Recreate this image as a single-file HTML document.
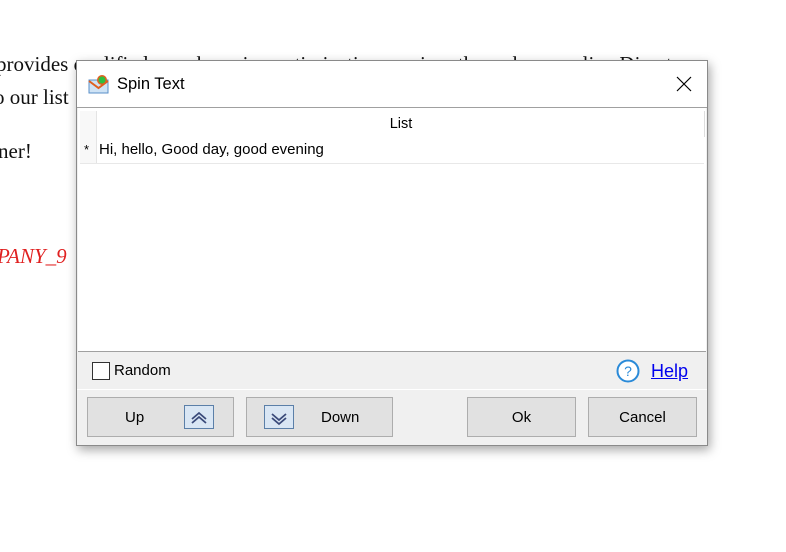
<!DOCTYPE html>
<html><head><meta charset="utf-8"><style>
body{margin:0;width:786px;height:552px;background:#fff;position:relative;overflow:hidden;font-family:"Liberation Sans",sans-serif}
.bg{position:absolute;font-family:"Liberation Serif",serif;font-size:21px;color:#111;white-space:nowrap}
.dlg{position:absolute;left:76px;top:60px;width:632px;height:386px;background:#f0f0f0;border:1px solid #8a8a8a;box-sizing:border-box;box-shadow:2px 4px 10px rgba(0,0,0,.35)}
.title{position:absolute;left:0;top:0;width:630px;height:46px;background:#fff;border-bottom:1px solid #a0a0a0}
.title span{position:absolute;left:40px;top:14px;font-size:16.5px;color:#000}
.grid{position:absolute;left:1px;top:47px;width:628px;height:243px;background:#fff;border-bottom:1px solid #a0a0a0}
.hdr{position:absolute;left:20px;top:3px;width:606px;height:26px;border-right:1px solid #ddd;text-align:center;font-size:14.5px;line-height:26px}
.ind{position:absolute;left:2px;top:3px;width:16px;height:52px;border-right:1px solid #e4e4e4;background:#f8f8f8}
.row{position:absolute;left:2px;top:29px;width:624px;height:26px;border-bottom:1px solid #e8e8e8;font-size:15px;line-height:26px}
.btn{position:absolute;top:336px;height:40px;background:#e1e1e1;border:1px solid #adadad;box-sizing:border-box;font-size:15px;line-height:40px;text-align:center}
.ic{position:absolute;top:7px;width:30px;height:24px;border:1px solid #5b7fa8;background:#d9e6f4;box-sizing:border-box}
</style></head><body>
<div class="bg" style="left:-4px;top:52px">provides qualified search engine optimization services through our online Directory</div>
<div class="bg" style="left:-6px;top:85px">o our list</div>
<div class="bg" style="left:-2px;top:139px">ner!</div>
<div class="bg" style="left:-3px;top:244px;color:#e02020;font-style:italic">PANY_9</div>
<div class="dlg">
 <div class="title">
  <svg style="position:absolute;left:11px;top:13px" width="22" height="20" viewBox="0 0 22 20"><rect x="1" y="6" width="19" height="13" fill="#cfe3f5" stroke="#5a8fc8"/><path d="M1 7l9.5 7L20 7" fill="none" stroke="#e06020" stroke-width="2"/><circle cx="14" cy="6" r="5" fill="#e06020"/><circle cx="14" cy="6" r="3.5" fill="#2ec040"/></svg>
  <span>Spin Text</span>
  <svg style="position:absolute;left:599px;top:15px" width="16" height="16"><path d="M1 1L15 15M15 1L1 15" stroke="#000" stroke-width="1.2"/></svg>
 </div>
 <div class="grid">
  <div class="ind"></div>
  <div class="hdr">List</div>
  <div class="row"><span style="position:absolute;left:4px;font-size:13px">*</span><span style="position:absolute;left:19px">Hi, hello, Good day, good evening</span></div>
 </div>
 <div style="position:absolute;left:15px;top:301px;width:16px;height:16px;border:1px solid #333;background:#fff"></div>
 <div style="position:absolute;left:37px;top:301px;font-size:15px">Random</div>
 <svg style="position:absolute;left:539px;top:298px" width="24" height="24"><circle cx="12" cy="12" r="10.5" fill="#fff" stroke="#2a8ad8" stroke-width="2"/><text x="12" y="17" text-anchor="middle" font-size="14" fill="#2a8ad8" font-family="Liberation Sans">?</text></svg>
 <div style="position:absolute;left:574px;top:300px;font-size:18px;color:#0000ee;text-decoration:underline">Help</div>
 <div style="position:absolute;left:0;top:328px;width:630px;border-top:1px solid #fff"></div>
 <div class="btn" style="left:10px;width:147px"><span style="position:absolute;left:37px">Up</span><div class="ic" style="left:96px"><svg width="28" height="22"><path d="M7 15l7-6 7 6M7 11l7-6 7 6" fill="none" stroke="#3a4a7a" stroke-width="1.8"/></svg></div></div>
 <div class="btn" style="left:169px;width:147px"><div class="ic" style="left:17px"><svg width="28" height="22"><path d="M7 6l7 6 7-6M7 10l7 6 7-6" fill="none" stroke="#3a4a7a" stroke-width="1.8"/></svg></div><span style="position:absolute;left:74px">Down</span></div>
 <div class="btn" style="left:390px;width:109px">Ok</div>
 <div class="btn" style="left:511px;width:109px">Cancel</div>
</div>
</body></html>
